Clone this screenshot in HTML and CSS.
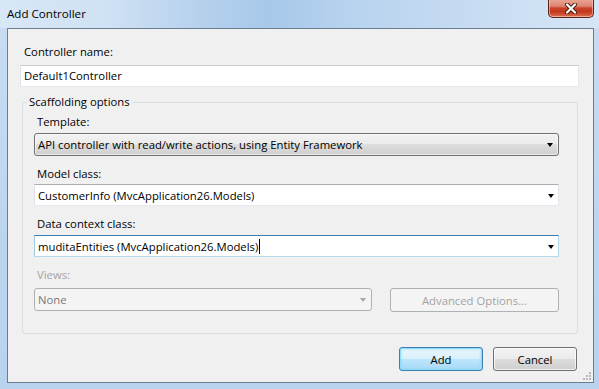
FILE: index.html
```html
<!DOCTYPE html>
<html>
<head>
<meta charset="utf-8">
<link rel="stylesheet" href="styles.css">
</head>
<body>
<div class="window">
  <div class="titlebar">
    <span class="title">Add Controller</span>
    <div class="close">
      <svg width="14" height="11" viewBox="0 0 14 11">
        <path d="M3 1.5 L11 9.5 M11 1.5 L3 9.5" stroke="#4a1a10" stroke-width="4" stroke-linecap="round" fill="none"/>
        <path d="M3 1.5 L11 9.5 M11 1.5 L3 9.5" stroke="#ffffff" stroke-width="2.2" stroke-linecap="round" fill="none"/>
      </svg>
    </div>
  </div>
  <div class="client">
    <div class="lbl lbl-name">Controller name:</div>
    <div class="textbox">Default1Controller</div>
    <fieldset class="group">
      <legend>Scaffolding options</legend>
      <div class="group-body">
        <div class="lbl lbl-template">Template:</div>
        <div class="combo">
          <span class="combo-text">API controller with read/write actions, using Entity Framework</span>
          <span class="arrow"></span>
        </div>
        <div class="lbl lbl-model">Model class:</div>
        <div class="dropedit">
          <span class="combo-text">CustomerInfo (MvcApplication26.Models)</span>
          <span class="arrow"></span>
        </div>
        <div class="lbl lbl-data">Data context class:</div>
        <div class="dropedit focused">
          <span class="combo-text">muditaEntities (MvcApplication26.Models)<span class="caret"></span></span>
          <span class="arrow"></span>
        </div>
        <div class="lbl lbl-views disabled">Views:</div>
        <div class="views-row">
          <div class="combo combo-disabled">
            <span class="combo-text">None</span>
            <span class="arrow arrow-disabled"></span>
          </div>
          <div class="btn btn-disabled">Advanced Options...</div>
        </div>
      </div>
    </fieldset>
    <div class="buttons">
      <div class="btn btn-default">Add</div>
      <div class="btn">Cancel</div>
    </div>
    <svg class="grip" width="9" height="9" viewBox="0 0 9 9">
      <g fill="#b8b8b8">
        <rect x="6" y="0" width="2" height="2"/>
        <rect x="3" y="3" width="2" height="2"/>
        <rect x="6" y="3" width="2" height="2"/>
        <rect x="0" y="6" width="2" height="2"/>
        <rect x="3" y="6" width="2" height="2"/>
        <rect x="6" y="6" width="2" height="2"/>
      </g>
    </svg>
  </div>
</div>
</body>
</html>
```

FILE: styles.css
```css
* { box-sizing: border-box; }

html, body {
  margin: 0;
  padding: 0;
  width: 599px;
  height: 389px;
  overflow: hidden;
}

body {
  font-family: "Open Sans", "Noto Sans", "DejaVu Sans", sans-serif;
  font-size: 11.3px;
  color: #000;
}

.window {
  width: 599px;
  height: 389px;
  display: flex;
  flex-direction: column;
  background: linear-gradient(to bottom, #c9ddf2 0%, #bcd5ef 60%, #b9d3ef 100%);
}

.titlebar {
  height: 28px;
  flex: none;
  display: flex;
  justify-content: space-between;
  align-items: flex-start;
  background: linear-gradient(90deg, #d8e7f6 0%, #cfe1f4 18%, #b4cfec 35%, #a7c8ea 45%, #b9d4ef 60%, #c8dcf2 80%, #d6e6f6 100%);
}

.title {
  padding-left: 7px;
  padding-top: 6px;
  line-height: 15px;
  font-size: 11.6px;
  color: #000;
}

.close {
  width: 46px;
  height: 19px;
  margin-right: 5px;
  margin-top: -1px;
  border: 1px solid #5c2418;
  border-top: none;
  border-radius: 0 0 5px 5px;
  background: linear-gradient(to bottom, #e9a996 0%, #dd8571 40%, #c8432a 50%, #c2381f 70%, #d35a3d 90%, #e0866a 100%);
  box-shadow: inset 0 0 0 1px rgba(255, 210, 195, 0.55);
  display: flex;
  align-items: center;
  justify-content: center;
  padding-top: 1px;
}

.client {
  flex: 1;
  margin: 0 5px 6px 7px;
  border: 1px solid #6b7d91;
  background: #f0f0f0;
  padding: 15px 14px 0 12px;
  position: relative;
  display: flex;
  flex-direction: column;
}

.lbl {
  line-height: 15px;
  height: 15px;
  white-space: nowrap;
}

.lbl-name { margin-bottom: 6px; padding-left: 4px; }
.lbl-template { margin-bottom: 4px; padding-left: 3px; }
.lbl-model { margin-top: 10px; margin-bottom: 3px; padding-left: 3px; }
.lbl-data { margin-top: 10px; margin-bottom: 4px; padding-left: 3px; }
.lbl-views { margin-top: 10px; margin-bottom: 6px; padding-left: 3px; }

.disabled { color: #a3a3a3; }

.textbox {
  height: 22px;
  border: 1px solid;
  border-color: #c9cbd0 #e3e9ef #e3e9ef #e2e3ea;
  background: #fff;
  padding-left: 3px;
  line-height: 20px;
  white-space: nowrap;
}

.group {
  margin: 8px 1px 0 2px;
  padding: 0;
  border: 1px solid #d5dfe5;
  border-radius: 3px;
  min-width: 0;
}

.group legend {
  margin-left: 4px;
  padding: 0 2px;
  line-height: 14px;
}

.group-body {
  padding: 5px 18px 21px 11px;
  display: flex;
  flex-direction: column;
}

.combo {
  height: 23px;
  border: 1px solid #707070;
  border-radius: 3px;
  background: linear-gradient(to bottom, #f2f2f2 0%, #ebebeb 50%, #dddddd 50%, #cfcfcf 100%);
  box-shadow: inset 0 0 0 1px rgba(255, 255, 255, 0.6);
  display: flex;
  align-items: center;
  justify-content: space-between;
  padding: 0 5px 0 3px;
}

.dropedit {
  height: 22px;
  border: 1px solid;
  border-color: #abadb3 #e3e9ef #e3e9ef #e2e3ea;
  background: #fff;
  display: flex;
  align-items: center;
  justify-content: space-between;
  padding: 0 4px 0 3px;
}

.dropedit.focused {
  border-color: #3d7bad #b7d9ed #b7d9ed #a4c9e3;
}

.combo-text {
  white-space: nowrap;
  line-height: 15px;
  display: flex;
  align-items: center;
}

.caret {
  display: inline-block;
  width: 1px;
  height: 15px;
  background: #000;
  margin-left: 1px;
}

.arrow {
  width: 0;
  height: 0;
  border-left: 3.5px solid transparent;
  border-right: 3.5px solid transparent;
  border-top: 4px solid #000;
  margin-top: 1px;
}

.arrow-disabled { border-top-color: #a8a8a8; }

.views-row {
  display: flex;
  gap: 18px;
}

.combo-disabled {
  flex: 1;
  border-color: #adb2b5;
  background: #f4f4f4;
  box-shadow: none;
  color: #7a7a7a;
  padding-right: 5px;
}

.btn {
  width: 84px;
  height: 24px;
  border: 1px solid #707070;
  border-radius: 3px;
  background: linear-gradient(to bottom, #f2f2f2 0%, #ebebeb 50%, #dddddd 50%, #cfcfcf 100%);
  box-shadow: inset 0 0 0 1px rgba(255, 255, 255, 0.7);
  display: flex;
  align-items: center;
  justify-content: center;
  line-height: 15px;
  white-space: nowrap;
}

.btn-disabled {
  width: 169px;
  border-color: #adb2b5;
  background: #f4f4f4;
  box-shadow: none;
  color: #a3a3a3;
}

.btn-default {
  border-color: #3c7fb1;
  background: linear-gradient(to bottom, #eaf6fd 0%, #d9f0fc 50%, #bee6fd 50%, #a7d9f5 100%);
  box-shadow: inset 0 0 0 1px #8fdcf8, inset 0 0 2px 2px rgba(120, 215, 250, 0.35);
}

.buttons {
  display: flex;
  justify-content: flex-end;
  gap: 10px;
  margin-top: 13px;
  margin-right: 2px;
}

.grip {
  position: absolute;
  right: 1px;
  bottom: 1px;
}
```
